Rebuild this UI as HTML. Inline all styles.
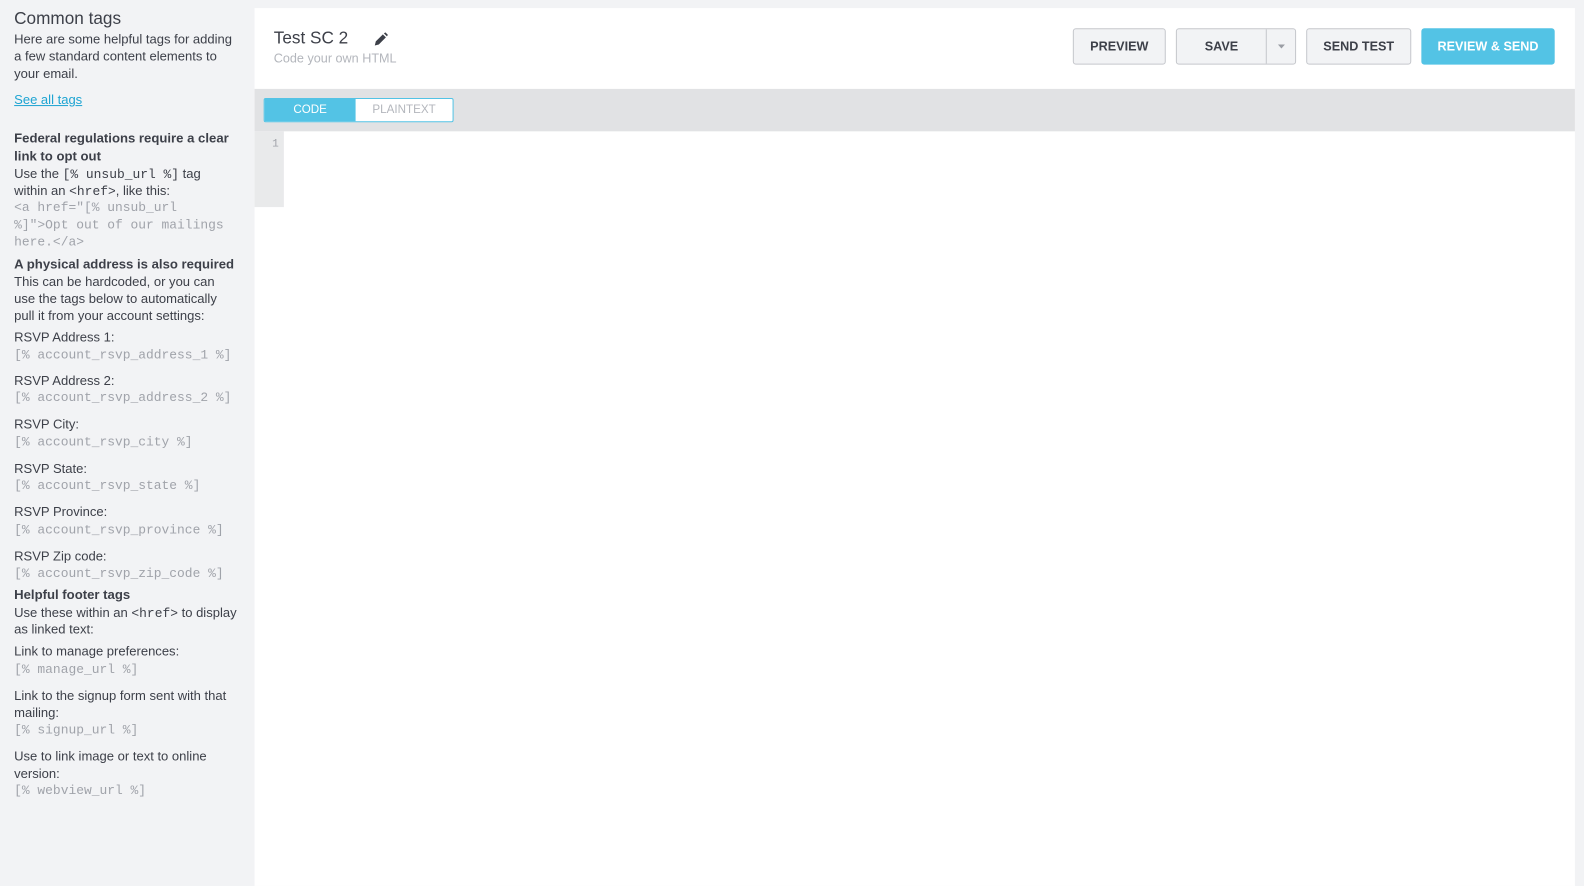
<!DOCTYPE html>
<html><head><meta charset="utf-8"><style>
*{margin:0;padding:0;box-sizing:border-box}
body{width:1584px;height:877px;background:#f2f3f5;font-family:"Liberation Sans",sans-serif;color:#3d4049;overflow:hidden}
#w{position:relative;width:1568px;height:869px;transform:scale(1.0102);transform-origin:0 0}
.sb{position:absolute;left:14px;width:222px;font-size:12.9px;line-height:17px}
.sb div{position:absolute;left:0;white-space:nowrap}
.b{font-weight:bold;font-size:13px}
.m{font-family:"Liberation Mono",monospace;font-size:12.8px;color:#a0a3aa}
.mk{font-family:"Liberation Mono",monospace;font-size:12.8px;color:#3d4049}
.main{position:absolute;left:252px;top:8px;width:1307px;height:869px;background:#fff}
.btn{position:absolute;top:20px;height:36px;border:1px solid #c5c7cc;border-radius:3px;background:#f2f3f5;font-size:12.5px;font-weight:bold;color:#3d4049;display:flex;align-items:center;justify-content:center}
</style></head><body><div id="w">
<div class="sb" style="top:0">
<div style="top:9px;font-size:17px;line-height:20px">Common tags</div>
<div style="top:30px">Here are some helpful tags for adding</div>
<div style="top:47px">a few standard content elements to</div>
<div style="top:64px">your email.</div>
<div style="top:90px;color:#1ea4d2;text-decoration:underline">See all tags</div>
<div class="b" style="top:128px">Federal regulations require a clear</div>
<div class="b" style="top:146px">link to opt out</div>
<div style="top:163px">Use the <span class="mk">[% unsub_url %]</span> tag</div>
<div style="top:180px">within an <span class="mk">&lt;href&gt;</span>, like this:</div>
<div class="m" style="top:197px">&lt;a href="[% unsub_url</div>
<div class="m" style="top:214px">%]"&gt;Opt out of our mailings</div>
<div class="m" style="top:231px">here.&lt;/a&gt;</div>
<div class="b" style="top:253px">A physical address is also required</div>
<div style="top:270px">This can be hardcoded, or you can</div>
<div style="top:287px">use the tags below to automatically</div>
<div style="top:304px">pull it from your account settings:</div>
<div style="top:325px">RSVP Address 1:</div>
<div class="m" style="top:343px">[% account_rsvp_address_1 %]</div>
<div style="top:368px">RSVP Address 2:</div>
<div class="m" style="top:385px">[% account_rsvp_address_2 %]</div>
<div style="top:411px">RSVP City:</div>
<div class="m" style="top:429px">[% account_rsvp_city %]</div>
<div style="top:455px">RSVP State:</div>
<div class="m" style="top:472px">[% account_rsvp_state %]</div>
<div style="top:498px">RSVP Province:</div>
<div class="m" style="top:516px">[% account_rsvp_province %]</div>
<div style="top:542px">RSVP Zip code:</div>
<div class="m" style="top:559px">[% account_rsvp_zip_code %]</div>
<div class="b" style="top:580px">Helpful footer tags</div>
<div style="top:598px">Use these within an <span class="mk">&lt;href&gt;</span> to display</div>
<div style="top:614px">as linked text:</div>
<div style="top:636px">Link to manage preferences:</div>
<div class="m" style="top:654px">[% manage_url %]</div>
<div style="top:680px">Link to the signup form sent with that</div>
<div style="top:697px">mailing:</div>
<div class="m" style="top:714px">[% signup_url %]</div>
<div style="top:740px">Use to link image or text to online</div>
<div style="top:757px">version:</div>
<div class="m" style="top:774px">[% webview_url %]</div>
</div>
<div class="main">
<div style="position:absolute;left:19px;top:20px;font-size:17px;color:#3d4049">Test SC 2</div>
<svg style="position:absolute;left:118px;top:24px" width="14" height="14" viewBox="0 0 14 14"><path d="M1 13l1-4 7-7 3 3-7 7z M10 1l1.5-1 2.5 2.5-1 1.5z" fill="#3d4049"/></svg>
<div style="position:absolute;left:19px;top:43px;font-size:12.5px;color:#b3b6bc">Code your own HTML</div>
<div class="btn" style="left:810px;width:92px">PREVIEW</div>
<div class="btn" style="left:912px;width:119px;justify-content:flex-start"><span style="width:89px;text-align:center">SAVE</span><span style="width:29px;height:34px;border-left:1px solid #c5c7cc;display:flex;align-items:center;justify-content:center"><svg width="7" height="4"><path d="M0 0h7L3.5 4z" fill="#9a9da4"/></svg></span></div>
<div class="btn" style="left:1041px;width:104px">SEND TEST</div>
<div class="btn" style="left:1155px;width:132px;background:#53c3e5;border-color:#53c3e5;color:#fff">REVIEW &amp; SEND</div>
<div style="position:absolute;left:0;top:80px;width:1307px;height:42px;background:#e1e2e4"></div>
<div style="position:absolute;left:9px;top:89px;width:188px;height:24px;border:1px solid #53c3e5;border-radius:2px;background:#fff;display:flex;font-size:11.5px">
<div style="width:90px;background:#53c3e5;color:#fff;display:flex;align-items:center;justify-content:center">CODE</div>
<div style="flex:1;color:#b3b6bc;display:flex;align-items:center;justify-content:center">PLAINTEXT</div></div>
<div style="position:absolute;left:0;top:122px;width:29px;height:75px;background:#e9eaeb;color:#a0a3aa;font-family:'Liberation Mono',monospace;font-size:11px;text-align:right;padding:7px 5px 0 0">1</div>
</div>
</div></body></html>
